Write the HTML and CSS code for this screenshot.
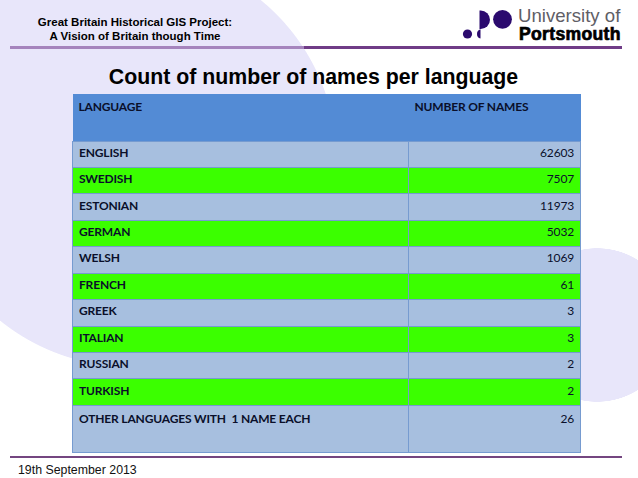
FILE: index.html
```html
<!DOCTYPE html>
<html lang="en">
<head>
<meta charset="utf-8">
<title>Count of number of names per language</title>
<link rel="stylesheet" href="styles.css">
</head>
<body>
<main class="slide">
  <header class="top">
    <div class="project">Great Britain Historical GIS Project:<br>A Vision of Britain though Time</div>
    <div class="logo">
      <svg class="mark" width="54" height="40" viewBox="0 0 54 40" aria-hidden="true">
        <circle cx="5.5" cy="30" r="4.6"/>
        <path d="M18.5 25.2v9.4a4.9 4.9 0 0 1 0-9.4z"/>
        <path d="M17.5 6.5h1.2a9.3 9.3 0 0 1 0 18.6h-1.2z"/>
        <circle cx="40.5" cy="15.3" r="9.4"/>
      </svg>
      <div class="wordmark">
        <div class="uni">University of</div>
        <div class="pompey">Portsmouth</div>
      </div>
    </div>
  </header>
  <div class="rule"><span class="rule-light"></span><span class="rule-dark"></span></div>
  <h1 class="title">Count of number of names per language</h1>
  <table class="data">
    <thead>
      <tr class="head"><th>LANGUAGE</th><th>NUMBER OF NAMES</th></tr>
    </thead>
    <tbody>
      <tr class="pale"><td>ENGLISH</td><td>62603</td></tr>
      <tr class="green"><td>SWEDISH</td><td>7507</td></tr>
      <tr class="pale"><td>ESTONIAN</td><td>11973</td></tr>
      <tr class="green"><td>GERMAN</td><td>5032</td></tr>
      <tr class="pale"><td>WELSH</td><td>1069</td></tr>
      <tr class="green"><td>FRENCH</td><td>61</td></tr>
      <tr class="pale"><td>GREEK</td><td>3</td></tr>
      <tr class="green"><td>ITALIAN</td><td>3</td></tr>
      <tr class="pale"><td>RUSSIAN</td><td>2</td></tr>
      <tr class="green"><td>TURKISH</td><td>2</td></tr>
      <tr class="pale tall"><td>OTHER LANGUAGES WITH&nbsp; 1 NAME EACH</td><td>26</td></tr>
    </tbody>
  </table>
  <div class="foot-rule"></div>
  <footer class="date">19th September 2013</footer>
</main>
</body>
</html>
```
FILE: styles.css
```css
* { box-sizing: border-box; }
html, body { margin: 0; padding: 0; background: #fff; }
.slide {
  width: 638px;
  height: 478px;
  overflow: hidden;
  padding: 0 16px 0 10px;
  font-family: "Liberation Sans", Arial, sans-serif;
  color: #000;
  background:
    radial-gradient(circle 207px at 130px 160px, #e8e6fa 99.6%, rgba(232,230,250,0) 100%),
    radial-gradient(circle 77px at 597px 325px, #e8e6fa 99.4%, rgba(232,230,250,0) 100%),
    #fff;
}
.top {
  display: flex;
  justify-content: space-between;
  height: 46px;
}
.project {
  width: 250px;
  padding-top: 15px;
  text-align: center;
  font-size: 11.5px;
  font-weight: 700;
  line-height: 14px;
}
.logo { display: flex; align-items: flex-start; padding-top: 4px; }
.mark { fill: #2b0a6e; margin-right: 2.5px; }
.wordmark { width: 104px; padding-top: 2px; }
.uni {
  font-size: 18.6px;
  line-height: 20px;
  color: #5f5e66;
  white-space: nowrap;
  font-weight: 400;
}
.pompey {
  font-size: 17.6px;
  line-height: 16px;
  font-weight: 700;
  color: #000;
  -webkit-text-stroke: 0.7px #000;
  white-space: nowrap;
  letter-spacing: 0.3px;
  padding-left: 1px;
}
.rule { display: flex; height: 3px; }
.rule-light { width: 294px; background: #a584bd; }
.rule-dark { flex: 1; background: #703c87; }
.title {
  margin: 0;
  height: 45px;
  padding: 15px 5px 0 0;
  text-align: center;
  font-size: 21.3px;
  line-height: 26px;
  font-weight: 700;
  white-space: nowrap;
}
.data {
  margin-left: 62px;
  width: 509px;
  height: 358.5px;
  border-collapse: collapse;
  table-layout: fixed;
  font-family: Lato, "Liberation Sans", sans-serif;
  font-size: 12px;
  letter-spacing: -0.17px;
  color: #0a0f2a;
}
.data th, .data td {
  padding: 0 6px 4px;
  border: 1px solid #769bd0;
  vertical-align: middle;
}
.data th { vertical-align: top; padding-top: 5px; text-align: left; font-weight: 700; border: 0; }
.data td:first-child { width: 336px; font-weight: 700; }
.data th:first-child { width: 336px; }
.data td:last-child { text-align: right; }
.head { height: 47px; background: #538bd5; }
.pale { height: 26.45px; background: #a7bfdf; }
.green { height: 26.45px; background: #3bff00; }
.tall { height: 47px; }
.tall td { vertical-align: top; padding-top: 5px; }
.foot-rule { height: 2px; margin-top: 3px; background: #744680; }
.date {
  padding: 4px 0 0 8px;
  font-size: 12.35px;
  line-height: 16px;
  color: #111;
}
```
